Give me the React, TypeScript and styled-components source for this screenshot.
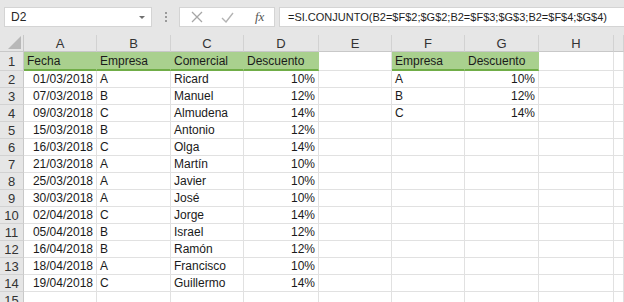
import React from 'react';
import styled, { createGlobalStyle } from 'styled-components';

const GlobalStyle = createGlobalStyle`
  html, body {
    margin: 0;
    padding: 0;
    background: #ffffff;
    overflow: hidden;
  }
  body {
    font-family: 'Liberation Sans', Arial, sans-serif;
  }
`;

type Row = [string, string, string, string, string, string];

const rows: Row[] = [
  ['01/03/2018', 'A', 'Ricard', '10%', 'A', '10%'],
  ['07/03/2018', 'B', 'Manuel', '12%', 'B', '12%'],
  ['09/03/2018', 'C', 'Almudena', '14%', 'C', '14%'],
  ['15/03/2018', 'B', 'Antonio', '12%', '', ''],
  ['16/03/2018', 'C', 'Olga', '14%', '', ''],
  ['21/03/2018', 'A', 'Martín', '10%', '', ''],
  ['25/03/2018', 'A', 'Javier', '10%', '', ''],
  ['30/03/2018', 'A', 'José', '10%', '', ''],
  ['02/04/2018', 'C', 'Jorge', '14%', '', ''],
  ['05/04/2018', 'B', 'Israel', '12%', '', ''],
  ['16/04/2018', 'B', 'Ramón', '12%', '', ''],
  ['18/04/2018', 'A', 'Francisco', '10%', '', ''],
  ['19/04/2018', 'C', 'Guillermo', '14%', '', ''],
  ['', '', '', '', '', ''],
];

const letters = ['A', 'B', 'C', 'D', 'E', 'F', 'G', 'H', ''];

const App = () => {
  return (
    <>
      <GlobalStyle />
      <Window>
        <Toolbar>
          <NameBox>
            <span>D2</span>
            <Caret />
          </NameBox>
          <Grip>
            <i />
            <i />
            <i />
          </Grip>
          <ActionBox>
            <svg width="12" height="12" viewBox="0 0 12 12">
              <path d="M1 1 L11 11 M11 1 L1 11" stroke="#a6a6a6" strokeWidth="1.3" fill="none" />
            </svg>
            <svg width="13" height="11" viewBox="0 0 13 11">
              <path d="M1 6 L5 10 L12 1" stroke="#b3b3b3" strokeWidth="1.4" fill="none" />
            </svg>
            <Fx>fx</Fx>
          </ActionBox>
          <FormulaBox>=SI.CONJUNTO(B2=$F$2;$G$2;B2=$F$3;$G$3;B2=$F$4;$G$4)</FormulaBox>
        </Toolbar>

        <Sheet>
          <Corner>
            <svg width="13" height="13" viewBox="0 0 13 13">
              <polygon points="13,0 13,13 0,13" fill="#b8b8b8" />
            </svg>
          </Corner>
          {letters.map((l, i) => (
            <ColHead key={'h' + i}>{l}</ColHead>
          ))}

          <RowHead first>1</RowHead>
          <Cell green first>Fecha</Cell>
          <Cell green first>Empresa</Cell>
          <Cell green first>Comercial</Cell>
          <Cell green first>Descuento</Cell>
          <Cell first />
          <Cell green first>Empresa</Cell>
          <Cell green first>Descuento</Cell>
          <Cell first />
          <Cell first />

          {rows.map((r, i) => (
            <React.Fragment key={i}>
              <RowHead>{i + 2}</RowHead>
              <Cell right>{r[0]}</Cell>
              <Cell>{r[1]}</Cell>
              <Cell>{r[2]}</Cell>
              <Cell right>{r[3]}</Cell>
              <Cell />
              <Cell>{r[4]}</Cell>
              <Cell right>{r[5]}</Cell>
              <Cell />
              <Cell />
            </React.Fragment>
          ))}
        </Sheet>
      </Window>
    </>
  );
};

export default App;

const Window = styled.div`
  width: 624px;
  height: 302px;
  overflow: hidden;
  background: #ffffff;
`;

const Toolbar = styled.div`
  height: 35px;
  box-sizing: border-box;
  padding: 7px 0 8px 4px;
  background: #e6e6e6;
  display: flex;
  align-items: stretch;
`;

const NameBox = styled.div`
  width: 148px;
  box-sizing: border-box;
  background: #ffffff;
  border: 1px solid #d4d4d4;
  display: flex;
  align-items: center;
  justify-content: space-between;
  padding: 0 6px 0 6px;
  font-size: 12px;
  color: #262626;
`;

const Caret = styled.span`
  width: 0;
  height: 0;
  border-left: 3px solid transparent;
  border-right: 3px solid transparent;
  border-top: 3px solid #6f6f6f;
`;

const Grip = styled.div`
  width: 27px;
  display: flex;
  flex-direction: column;
  align-items: center;
  justify-content: center;
  gap: 2px;
  i {
    width: 2px;
    height: 2px;
    background: #9a9a9a;
  }
`;

const ActionBox = styled.div`
  width: 96px;
  box-sizing: border-box;
  background: #ffffff;
  border: 1px solid #d4d4d4;
  display: flex;
  align-items: center;
  padding: 0 8px 0 11px;
  gap: 18px;
`;

const Fx = styled.span`
  font-family: 'Liberation Serif', 'Times New Roman', serif;
  font-style: italic;
  font-size: 13px;
  color: #555555;
  margin-left: 3px;
`;

const FormulaBox = styled.div`
  flex: 1;
  margin-left: 4px;
  box-sizing: border-box;
  background: #ffffff;
  border: 1px solid #d4d4d4;
  border-right: none;
  display: flex;
  align-items: center;
  padding-left: 8px;
  font-size: 11px;
  color: #1e1e1e;
  white-space: nowrap;
  overflow: hidden;
`;

const Sheet = styled.div`
  display: grid;
  grid-template-columns: 24px 73px 74px 73px 75px 73px 73px 74px 75px 10px;
  grid-template-rows: 17px 19px repeat(14, 17px);
  font-size: 12px;
  color: #1a1a1a;
`;

const Corner = styled.div`
  background: #e6e6e6;
  border-right: 1px solid #c8c8c8;
  border-bottom: 1px solid #c8c8c8;
  box-sizing: border-box;
  display: flex;
  align-items: flex-end;
  justify-content: flex-end;
  padding: 0 2px 2px 0;
`;

const ColHead = styled.div`
  background: #e6e6e6;
  border-right: 1px solid #d2d2d2;
  border-bottom: 1px solid #c8c8c8;
  box-sizing: border-box;
  display: flex;
  align-items: center;
  justify-content: center;
  font-size: 13px;
  color: #333333;
`;

const RowHead = styled.div<{ first?: boolean }>`
  background: #e6e6e6;
  border-right: 1px solid #c8c8c8;
  border-bottom: 1px solid #d2d2d2;
  box-sizing: border-box;
  display: flex;
  align-items: center;
  justify-content: center;
  font-size: 13px;
  color: #333333;
  padding-top: ${(p) => (p.first ? '1px' : '0')};
`;

const Cell = styled.div<{ green?: boolean; right?: boolean; first?: boolean }>`
  box-sizing: border-box;
  display: flex;
  align-items: center;
  justify-content: ${(p) => (p.right ? 'flex-end' : 'flex-start')};
  padding: 0 3px 0 3px;
  white-space: nowrap;
  overflow: hidden;
  background: ${(p) => (p.green ? '#a9d08e' : '#ffffff')};
  border-right: 1px solid ${(p) => (p.green ? '#a9d08e' : '#e1e1e1')};
  border-bottom: ${(p) => (p.green ? '2px solid #70ad47' : '1px solid #e1e1e1')};
  padding-top: ${(p) => (p.first ? '1px' : '0')};
`;
